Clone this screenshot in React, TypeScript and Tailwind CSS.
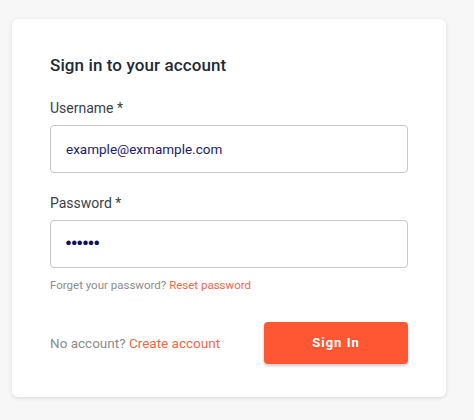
import React from "react";

export default function App() {
  return (
    <div
      className="w-[474px] h-[420px] bg-[#f7f7f7] pt-[19px] pl-[12px] overflow-hidden"
      style={{ fontFamily: "Roboto, 'Liberation Sans', sans-serif" }}
    >
      <div className="w-[434px] h-[378px] bg-white rounded-[6px] shadow-[0_1px_4px_rgba(0,0,0,0.12)] px-[38px] pt-[34px] flex flex-col">
        <h1 className="text-[17px] leading-[24px] font-medium text-[#1f2a37] tracking-[0.1px]">
          Sign in to your account
        </h1>
        <label className="mt-[21px] text-[14px] leading-[20px] text-[#3a3f47]">
          Username *
        </label>
        <div className="mt-[7px] h-[48px] border border-[#c8c8c8] rounded-[4px] flex items-center pl-[15px] text-[13.5px] text-[#1b1b6b]">
          example@exmample.com
        </div>
        <label className="mt-[20px] text-[14px] leading-[20px] text-[#3a3f47]">
          Password *
        </label>
        <div className="mt-[7px] h-[48px] border border-[#c8c8c8] rounded-[4px] flex items-center pl-[14px] text-[19px] font-bold text-[#10105a] tracking-[-1.2px]">
          ••••••
        </div>
        <p className="mt-[9px] text-[11.5px] leading-[16px] text-[#8c8c8c]">
          Forget your password? <span className="text-[#f2684a]">Reset password</span>
        </p>
        <div className="mt-[29px] flex items-center justify-between">
          <p className="text-[13.5px] leading-[20px] text-[#8c8c8c]">
            No account? <span className="text-[#f2684a]">Create account</span>
          </p>
          <button className="w-[144px] h-[42px] rounded-[4px] bg-[#ff5733] text-white text-[13px] font-bold tracking-[1px] shadow-[0_2px_3px_rgba(0,0,0,0.2)]">
            Sign In
          </button>
        </div>
      </div>
    </div>
  );
}
